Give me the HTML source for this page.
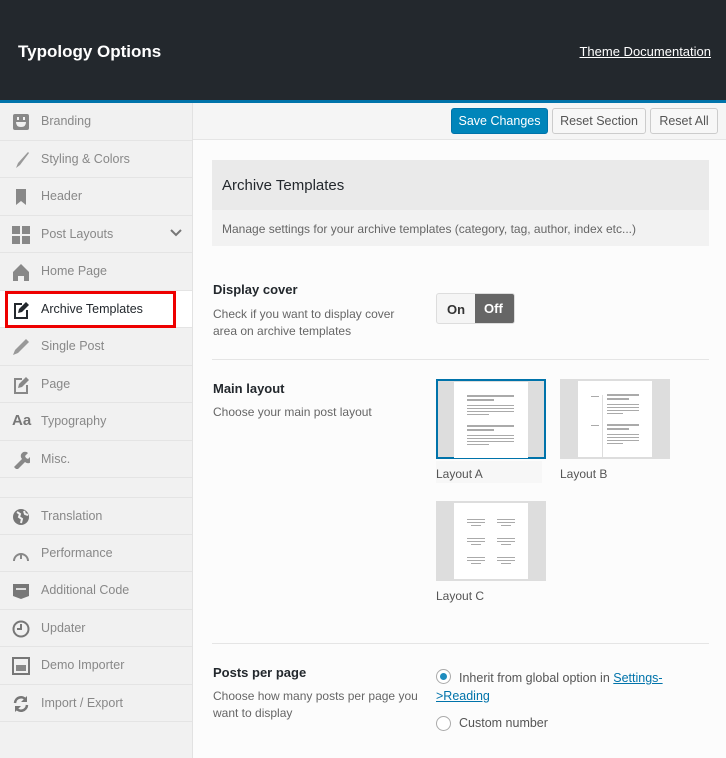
<!DOCTYPE html>
<html><head><style>
*{box-sizing:border-box;margin:0;padding:0}
body{width:726px;height:758px;overflow:hidden;background:#fcfcfc;font-family:"Liberation Sans",sans-serif;font-size:12.5px;color:#555;position:relative}
.hdr{position:absolute;left:0;top:0;width:726px;height:100px;background:#23282d}
.hdr h1{position:absolute;left:18px;top:42px;color:#fff;font-size:17px;font-weight:bold}
.hdr a{position:absolute;right:15px;top:44px;color:#fff;font-size:13px;text-decoration:underline}
.bl{position:absolute;top:100px;left:0;width:726px;height:3px;background:#0073aa}
.side{position:absolute;left:0;top:103px;width:193px;height:655px;background:#f1f1f1;border-right:1px solid #e2e2e2}
.it{position:absolute;left:0;width:192px;height:37.5px;border-bottom:1px solid #e4e4e4;color:#888;font-size:12.5px}
.it span{position:absolute;left:41px;top:11px}
.it svg{position:absolute;left:12px;top:10px}
.act{background:#fff;color:#23282d}
.red{position:absolute;left:5px;top:291px;width:171px;height:37px;border:3px solid #e00}
.tb{position:absolute;left:193px;top:103px;width:533px;height:37px;background:#f5f5f5;border-bottom:1px solid #e5e5e5}
.btn{position:absolute;top:108px;height:26px;border:1px solid #ccc;background:#f7f7f7;border-radius:3px;color:#555;font-size:12.5px;text-align:center;line-height:24px}
.ttl{position:absolute;left:212px;top:160px;width:497px;height:50px;background:#eaeaea}
.ttl b{position:absolute;left:10px;top:17px;font-weight:normal;font-size:15px;color:#23282d}
.dsc{position:absolute;left:212px;top:210px;width:497px;height:36px;background:#f2f2f2;color:#666;padding:12px 10px;font-size:12px}
.lb{position:absolute;left:213px;color:#23282d;font-size:13px;font-weight:bold}
.ds{position:absolute;left:213px;color:#666;font-size:12px;line-height:17px}
.hr{position:absolute;left:212px;width:497px;height:1px;background:#e5e5e5}
.lay{position:absolute;width:110px;height:80px;background:#ddd}
.lay .pg{position:absolute;left:18px;top:2px;width:74px;height:76px;background:#fff}
.cap{position:absolute;font-size:12px;color:#555}
</style></head><body>
<div class="hdr"><h1>Typology Options</h1><a>Theme Documentation</a></div>
<div class="bl"></div>
<div class="side">
<div class="it" style="top:0"><svg width="18" height="18"><rect x="1" y="1" width="16" height="16" rx="2" fill="#888"/><rect x="5" y="4" width="2" height="3" fill="#f1f1f1"/><rect x="11" y="4" width="2" height="3" fill="#f1f1f1"/><path d="M4 9h10q0 5-5 5t-5-5z" fill="#f1f1f1"/></svg><span>Branding</span></div>
<div class="it" style="top:37.5px"><svg width="18" height="18"><path d="M16 1L6 12l-2 5 4-3L17 2z" fill="#999"/></svg><span>Styling &amp; Colors</span></div>
<div class="it" style="top:75px"><svg width="18" height="18"><path d="M4 1h10v16l-5-4-5 4z" fill="#888"/></svg><span>Header</span></div>
<div class="it" style="top:112.5px"><svg width="18" height="18"><rect x="0" y="0" width="8" height="8" fill="#888"/><rect x="10" y="0" width="8" height="8" fill="#888"/><rect x="0" y="10" width="8" height="8" fill="#888"/><rect x="10" y="10" width="8" height="8" fill="#888"/></svg><span>Post Layouts</span><svg style="left:170px;top:13px" width="12" height="8"><path d="M1 1l5 5 5-5" stroke="#777" stroke-width="2" fill="none"/></svg></div>
<div class="it" style="top:150px"><svg width="18" height="18"><path d="M1 9L9 1l8 8v9h-5v-5H6v5H1z" fill="#888"/></svg><span>Home Page</span></div>
<div class="it act" style="top:187.5px"><svg width="18" height="18"><path d="M2 2h8v2H4v12h10V9h2v9H2z" fill="#23282d"/><path d="M14 1l3 3-7 7-4 1 1-4z" fill="#23282d"/></svg><span>Archive Templates</span></div>
<div class="it" style="top:225px"><svg width="18" height="18"><path d="M14 1l3 3L6 15l-5 2 2-5z" fill="#999"/></svg><span>Single Post</span></div>
<div class="it" style="top:262.5px"><svg width="18" height="18"><path d="M2 2h8v2H4v12h10V9h2v9H2z" fill="#888"/><path d="M14 1l3 3-7 7-4 1 1-4z" fill="#888"/></svg><span>Page</span></div>
<div class="it" style="top:300px"><span style="left:12px;font-weight:bold;font-size:15px;top:9px;color:#777">Aa</span><span>Typography</span></div>
<div class="it" style="top:337.5px"><svg width="18" height="18"><path d="M2 16L10 8a4 4 0 016-6l-3 3 1 2 2 1 3-3a4 4 0 01-6 6l-8 8z" fill="#888"/></svg><span>Misc.</span></div>
<div class="it" style="top:394px;border-top:1px solid #e4e4e4"><svg width="18" height="18"><circle cx="9" cy="9" r="8" fill="#777"/><path d="M5 4l3 2-1 3 3 2-1 4M12 3l1 3 3 1" stroke="#f1f1f1" stroke-width="2" fill="none"/></svg><span>Translation</span></div>
<div class="it" style="top:431.5px"><svg width="18" height="18"><path d="M2 16a7 7 0 0114 0" stroke="#888" stroke-width="2" fill="none"/><path d="M9 10v4" stroke="#888" stroke-width="2"/></svg><span>Performance</span></div>
<div class="it" style="top:469px"><svg width="18" height="18"><path d="M1 2h16v12l-8 3-8-3z" fill="#777"/><rect x="4" y="6" width="10" height="2" fill="#ddd"/></svg><span>Additional Code</span></div>
<div class="it" style="top:506.5px"><svg width="18" height="18"><circle cx="9" cy="9" r="7.5" stroke="#777" stroke-width="2" fill="none"/><path d="M9 4v5H5" stroke="#777" stroke-width="2" fill="none"/></svg><span>Updater</span></div>
<div class="it" style="top:544px"><svg width="18" height="18"><rect x="1" y="1" width="16" height="16" stroke="#777" stroke-width="2" fill="none"/><rect x="4" y="8" width="10" height="6" fill="#888"/></svg><span>Demo Importer</span></div>
<div class="it" style="top:581.5px"><svg width="18" height="18"><path d="M3 8a6 6 0 0111-3M15 10a6 6 0 01-11 3" stroke="#777" stroke-width="2.5" fill="none"/><path d="M15 1v6h-6zM3 17v-6h6z" fill="#777"/></svg><span>Import / Export</span></div>
</div>
<div class="red"></div>
<div class="tb"></div>
<div class="btn" style="left:451px;width:97px;background:#0085ba;border-color:#0073aa;color:#fff">Save Changes</div>
<div class="btn" style="left:552px;width:94px">Reset Section</div>
<div class="btn" style="left:650px;width:68px">Reset All</div>
<div class="ttl"><b>Archive Templates</b></div>
<div class="dsc">Manage settings for your archive templates (category, tag, author, index etc...)</div>
<div class="lb" style="top:282px">Display cover</div>
<div class="ds" style="top:306px">Check if you want to display cover<br>area on archive templates</div>
<div style="position:absolute;left:436px;top:293px;width:79px;height:31px;border:1px solid #ddd;border-radius:3px;background:#f5f5f5;overflow:hidden">
<span style="position:absolute;left:10px;top:8px;font-weight:bold;color:#333;font-size:13px">On</span>
<div style="position:absolute;left:38px;top:0;width:41px;height:31px;background:#666;color:#fff;font-weight:bold;font-size:13px;padding:7px 0 0 9px">Off</div></div>
<div class="hr" style="top:359px"></div>
<div class="lb" style="top:381px">Main layout</div>
<div class="ds" style="top:404px">Choose your main post layout</div>
<div class="lay" style="left:436px;top:379px;border:2px solid #0073aa"><div class="pg" style="left:16px;top:1px">
<svg width="74" height="76"><g fill="#aaa"><rect x="13" y="13" width="47" height="2"/><rect x="13" y="17" width="27" height="2"/><rect x="13" y="23" width="47" height="1"/><rect x="13" y="26" width="47" height="1"/><rect x="13" y="29" width="47" height="1"/><rect x="13" y="32" width="22" height="1"/><rect x="13" y="43" width="47" height="2"/><rect x="13" y="47" width="27" height="2"/><rect x="13" y="53" width="47" height="1"/><rect x="13" y="56" width="47" height="1"/><rect x="13" y="59" width="47" height="1"/><rect x="13" y="62" width="22" height="1"/></g></svg></div></div>
<div class="lay" style="left:560px;top:379px"><div class="pg"><svg width="74" height="76"><g fill="#aaa"><rect x="13" y="15" width="8" height="1"/><rect x="13" y="44" width="8" height="1"/><rect x="24" y="14" width="1" height="62" fill="#ddd"/><rect x="29" y="13" width="32" height="2"/><rect x="29" y="17" width="22" height="2"/><rect x="29" y="23" width="32" height="1"/><rect x="29" y="26" width="32" height="1"/><rect x="29" y="29" width="32" height="1"/><rect x="29" y="32" width="16" height="1"/><rect x="29" y="43" width="32" height="2"/><rect x="29" y="47" width="22" height="2"/><rect x="29" y="53" width="32" height="1"/><rect x="29" y="56" width="32" height="1"/><rect x="29" y="59" width="32" height="1"/><rect x="29" y="62" width="16" height="1"/></g></svg></div></div>
<div style="position:absolute;left:436px;top:461px;width:106px;height:22px;background:#f7f7f7"></div>
<div class="cap" style="left:436px;top:467px">Layout A</div>
<div class="cap" style="left:560px;top:467px">Layout B</div>
<div class="lay" style="left:436px;top:501px"><div class="pg"><svg width="74" height="76"><g fill="#aaa"><rect x="13" y="16" width="18" height="1"/><rect x="13" y="19" width="18" height="1"/><rect x="17" y="22" width="10" height="1"/><rect x="43" y="16" width="18" height="1"/><rect x="43" y="19" width="18" height="1"/><rect x="47" y="22" width="10" height="1"/><rect x="13" y="35" width="18" height="1"/><rect x="13" y="38" width="18" height="1"/><rect x="17" y="41" width="10" height="1"/><rect x="43" y="35" width="18" height="1"/><rect x="43" y="38" width="18" height="1"/><rect x="47" y="41" width="10" height="1"/><rect x="13" y="54" width="18" height="1"/><rect x="13" y="57" width="18" height="1"/><rect x="17" y="60" width="10" height="1"/><rect x="43" y="54" width="18" height="1"/><rect x="43" y="57" width="18" height="1"/><rect x="47" y="60" width="10" height="1"/></g></svg></div></div>
<div class="cap" style="left:436px;top:589px">Layout C</div>
<div class="hr" style="top:643px"></div>
<div class="lb" style="top:665px">Posts per page</div>
<div class="ds" style="top:688px">Choose how many posts per page you<br>want to display</div>
<div style="position:absolute;left:436px;top:669px;width:15px;height:15px;border:1px solid #aaa;border-radius:50%;background:#fff"><div style="position:absolute;left:3px;top:3px;width:7px;height:7px;border-radius:50%;background:#1e8cbe"></div></div>
<div style="position:absolute;left:459px;top:669px;font-size:12.5px;color:#555;line-height:18px">Inherit from global option in <span style="color:#0073aa;text-decoration:underline">Settings-</span><br><span style="color:#0073aa;text-decoration:underline;margin-left:-23px">&gt;Reading</span></div>
<div style="position:absolute;left:436px;top:716px;width:15px;height:15px;border:1px solid #aaa;border-radius:50%;background:#fff"></div>
<div style="position:absolute;left:459px;top:716px;font-size:12.5px;color:#555">Custom number</div>
</body></html>
